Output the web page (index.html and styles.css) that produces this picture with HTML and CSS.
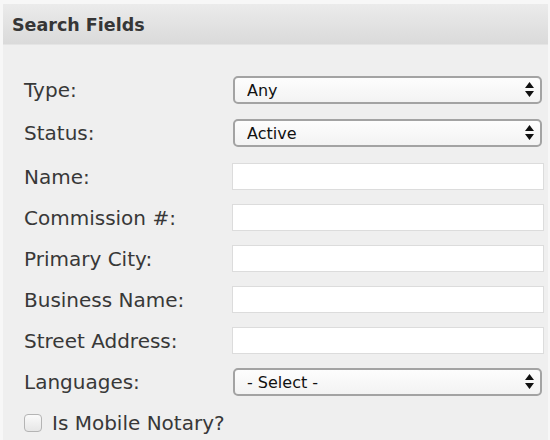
FILE: index.html
```html
<!DOCTYPE html>
<html>
<head>
<meta charset="utf-8">
<link rel="stylesheet" href="styles.css">
</head>
<body>
<div class="panel">
  <div class="header">Search Fields</div>
  <div class="form">
    <div class="row row-type">
      <label class="lbl">Type:</label>
      <div class="sel-wrap">
        <select class="sel"><option>Any</option></select>
        <svg class="arrows" width="9" height="15" viewBox="0 0 9 15"><path d="M4.5 0 L9 6 L0 6 Z M0 9 L9 9 L4.5 15 Z" fill="#111"/></svg>
      </div>
    </div>
    <div class="row row-status">
      <label class="lbl">Status:</label>
      <div class="sel-wrap">
        <select class="sel"><option>Active</option></select>
        <svg class="arrows" width="9" height="15" viewBox="0 0 9 15"><path d="M4.5 0 L9 6 L0 6 Z M0 9 L9 9 L4.5 15 Z" fill="#111"/></svg>
      </div>
    </div>
    <div class="row row-input">
      <label class="lbl">Name:</label>
      <input class="txt" type="text">
    </div>
    <div class="row row-input">
      <label class="lbl">Commission #:</label>
      <input class="txt" type="text">
    </div>
    <div class="row row-input">
      <label class="lbl">Primary City:</label>
      <input class="txt" type="text">
    </div>
    <div class="row row-input">
      <label class="lbl">Business Name:</label>
      <input class="txt" type="text">
    </div>
    <div class="row row-input">
      <label class="lbl">Street Address:</label>
      <input class="txt" type="text">
    </div>
    <div class="row row-lang">
      <label class="lbl">Languages:</label>
      <div class="sel-wrap">
        <select class="sel"><option>- Select -</option></select>
        <svg class="arrows" width="9" height="15" viewBox="0 0 9 15"><path d="M4.5 0 L9 6 L0 6 Z M0 9 L9 9 L4.5 15 Z" fill="#111"/></svg>
      </div>
    </div>
    <div class="check-row">
      <input class="chk" type="checkbox" id="mobile">
      <label class="chk-lbl" for="mobile">Is Mobile Notary?</label>
    </div>
  </div>
</div>
</body>
</html>
```
FILE: styles.css
```css
html, body {
  margin: 0;
  padding: 0;
  background: #f7f7f7;
}
body {
  font-family: "DejaVu Sans", Verdana, sans-serif;
  color: #333;
  height: 440px;
  overflow: hidden;
}
.panel {
  margin: 4px 2px 0 3px;
  background: #efefef;
  height: 436px;
}
.header {
  height: 41px;
  line-height: 37px;
  padding: 3px 0 0 9px;
  font-weight: bold;
  font-size: 17.5px;
  color: #363636;
  background: linear-gradient(#ebebeb, #dadada);
  border-bottom: 1px solid #e4e4e4;
  box-sizing: border-box;
}
.form {
  padding: 31px 4px 0 21px;
}
.row {
  display: flex;
  align-items: flex-start;
}
.lbl {
  width: 208px;
  flex: none;
  font-size: 20px;
  color: #383838;
  display: flex;
  align-items: center;
}
.row-type { height: 43px; }
.row-status { height: 44px; }
.row-input { height: 41px; }
.row-lang { height: 40px; }
.row-type .lbl, .row-status .lbl, .row-lang .lbl { height: 28px; }
.row-input .lbl { height: 27px; }
.sel-wrap {
  position: relative;
  width: 309px;
  height: 28px;
  margin-left: 1px;
}
.sel {
  appearance: none;
  -webkit-appearance: none;
  width: 100%;
  height: 28px;
  margin: 0;
  box-sizing: border-box;
  border: 2px solid #a3a3a3;
  border-radius: 5px;
  background: linear-gradient(#fdfdfd, #f3f3f3);
  font-family: "DejaVu Sans", Verdana, sans-serif;
  font-size: 16px;
  color: #111;
  padding: 0 0 0 12px;
  outline: none;
}
.arrows {
  position: absolute;
  right: 8px;
  top: 6px;
  pointer-events: none;
}
.txt {
  width: 312px;
  height: 27px;
  box-sizing: border-box;
  margin: 0;
  border: 1px solid #dcdcdc;
  background: #fff;
  padding: 0 6px;
  font-family: "DejaVu Sans", Verdana, sans-serif;
  font-size: 16px;
  outline: none;
}
.check-row {
  display: flex;
  align-items: center;
  height: 30px;
}
.chk {
  appearance: none;
  -webkit-appearance: none;
  width: 18px;
  height: 18px;
  margin: 0 10px 0 0;
  border: 1px solid #b4b4b4;
  border-radius: 4px;
  background: linear-gradient(#fafafa, #e6e6e6);
  box-sizing: border-box;
}
.chk-lbl {
  font-size: 20px;
  color: #383838;
}
```
